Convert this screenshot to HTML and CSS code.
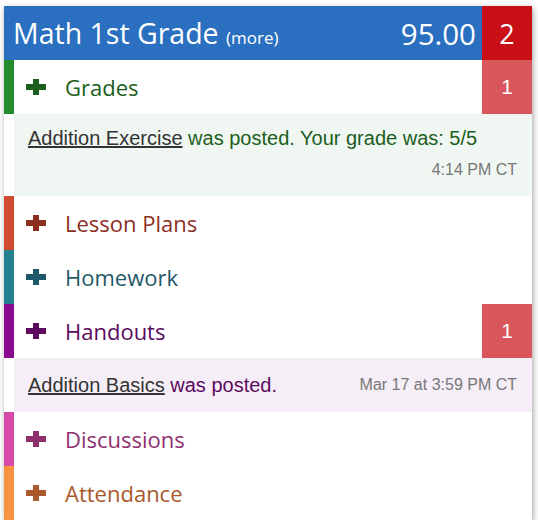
FILE: index.html
```html
<!DOCTYPE html>
<html>
<head>
<meta charset="utf-8">
<link rel="stylesheet" href="styles.css">
</head>
<body>
<div class="card">
  <div class="header">
    <div class="title">Math 1st Grade <span class="more">(more)</span></div>
    <div class="score">95.00</div>
    <div class="badge badge-dark">2</div>
  </div>

  <div class="row grades">
    <svg class="plus" viewBox="0 0 20 16"><path d="M7 0h6v5h7v6h-7v5h-6v-5h-7v-6h7z"/></svg>
    <span class="label">Grades</span>
    <div class="badge">1</div>
  </div>
  <div class="detail detail-green tall">
    <div class="msg"><a class="link">Addition Exercise</a> was posted. Your grade was: 5/5</div>
    <div class="time">4:14 PM CT</div>
  </div>

  <div class="row lesson">
    <svg class="plus" viewBox="0 0 20 16"><path d="M7 0h6v5h7v6h-7v5h-6v-5h-7v-6h7z"/></svg>
    <span class="label">Lesson Plans</span>
  </div>
  <div class="row homework">
    <svg class="plus" viewBox="0 0 20 16"><path d="M7 0h6v5h7v6h-7v5h-6v-5h-7v-6h7z"/></svg>
    <span class="label">Homework</span>
  </div>
  <div class="row handouts">
    <svg class="plus" viewBox="0 0 20 16"><path d="M7 0h6v5h7v6h-7v5h-6v-5h-7v-6h7z"/></svg>
    <span class="label">Handouts</span>
    <div class="badge">1</div>
  </div>
  <div class="detail detail-purple inline">
    <div class="msg"><a class="link">Addition Basics</a> was posted.</div>
    <div class="time">Mar 17 at 3:59 PM CT</div>
  </div>
  <div class="row discussions">
    <svg class="plus" viewBox="0 0 20 16"><path d="M7 0h6v5h7v6h-7v5h-6v-5h-7v-6h7z"/></svg>
    <span class="label">Discussions</span>
  </div>
  <div class="row attendance">
    <svg class="plus" viewBox="0 0 20 16"><path d="M7 0h6v5h7v6h-7v5h-6v-5h-7v-6h7z"/></svg>
    <span class="label">Attendance</span>
  </div>
</div>
</body>
</html>
```

FILE: styles.css
```css
html, body {
  margin: 0;
  padding: 0;
  background: #ffffff;
}
body {
  padding: 6px 0 0 4px;
}
.card {
  width: 528px;
  background: #ffffff;
  box-shadow: 1px 2px 6px rgba(0, 0, 0, 0.38);
  font-family: "Open Sans", "Noto Sans", sans-serif;
}
.header {
  display: flex;
  align-items: center;
  height: 54px;
  background: #2b70c0;
  color: #ffffff;
}
.title {
  flex: 1;
  padding-left: 9px;
  font-size: 28.5px;
  white-space: nowrap;
}
.more {
  font-size: 17px;
}
.score {
  font-size: 29.5px;
  padding-right: 6px;
}
.badge {
  width: 50px;
  height: 54px;
  display: flex;
  align-items: center;
  justify-content: center;
  background: #d9575a;
  color: #ffffff;
  font-family: "Liberation Sans", Arial, sans-serif;
  font-size: 21px;
  margin-left: auto;
}
.badge-dark {
  background: #c81016;
  font-family: "Open Sans", "Noto Sans", sans-serif;
  font-size: 27px;
  margin-left: 0;
}
.row {
  display: flex;
  align-items: center;
  height: 54px;
  border-left: 10px solid;
}
.plus {
  width: 20px;
  height: 16px;
  margin-left: 12px;
  margin-right: 19px;
  flex: none;
}
.label {
  font-size: 22px;
}
.grades { border-color: #238a2e; color: #1b5e20; }
.grades .plus { fill: #1b5e20; }
.lesson { border-color: #d04a30; color: #8c2f1f; }
.lesson .plus { fill: #8c2f1f; }
.homework { border-color: #24818f; color: #1f5868; }
.homework .plus { fill: #1f5868; }
.handouts { border-color: #8a0b8f; color: #5b0a5e; }
.handouts .plus { fill: #5b0a5e; }
.discussions { border-color: #d84aa8; color: #8f2f6e; }
.discussions .plus { fill: #8f2f6e; }
.attendance { border-color: #f79240; color: #a9592a; }
.attendance .plus { fill: #a9592a; }

.detail {
  margin-left: 10px;
  font-family: "Liberation Sans", Arial, sans-serif;
  font-size: 20px;
  box-sizing: border-box;
}
.detail-green {
  background: #f0f6f2;
  color: #1b5e20;
}
.detail-purple {
  background: #f6eef7;
  color: #5b0a5e;
}
.tall {
  height: 82px;
  padding: 13px 15px 0 14px;
}
.tall .time {
  text-align: right;
  margin-top: 11px;
}
.inline {
  height: 54px;
  display: flex;
  align-items: center;
  justify-content: space-between;
  padding: 0 15px 0 14px;
}
.link {
  color: #333333;
  text-decoration: underline;
}
.time {
  color: #777777;
  font-size: 16px;
}
```
